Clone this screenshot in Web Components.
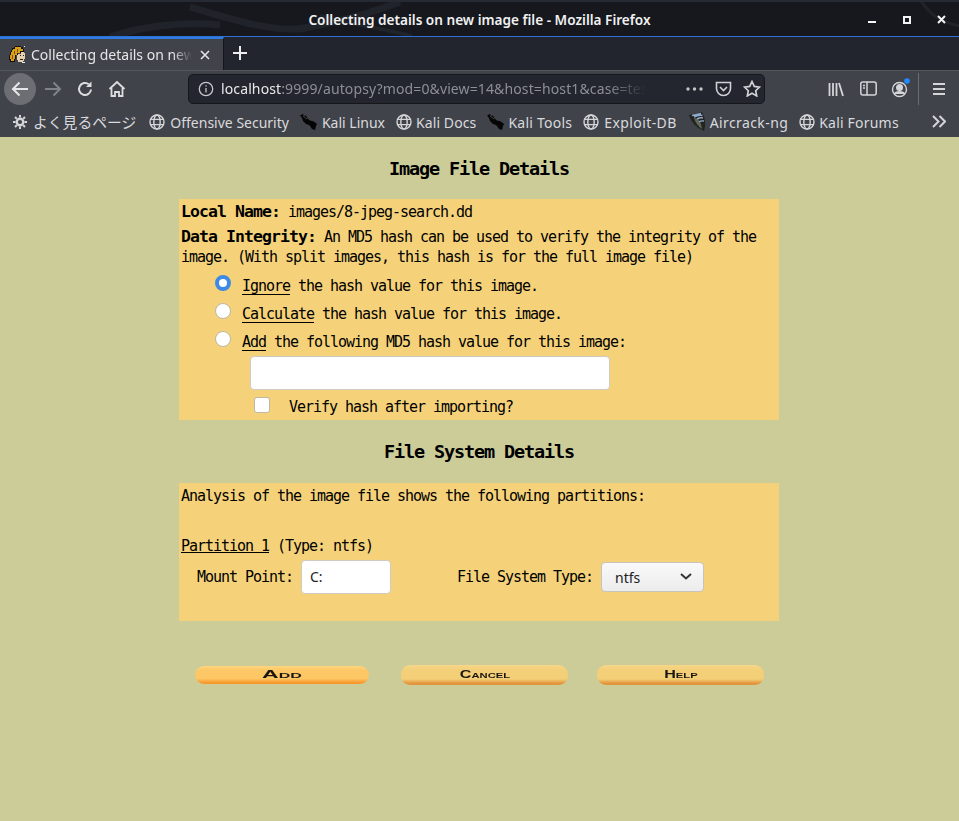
<!DOCTYPE html>
<html lang="en">
<head>
<meta charset="utf-8">
<title>Collecting details on new image file - Mozilla Firefox</title>
<style>
html, body { margin: 0; height: 100%; background: #cccc99; }
body { display: flex; flex-direction: column; width: 959px; height: 821px; overflow: hidden; }
</style>
</head>
<body>
<fx-titlebar>Collecting details on new image file - Mozilla Firefox</fx-titlebar>
<fx-tabstrip>Collecting details on new image file</fx-tabstrip>
<fx-navbar></fx-navbar>
<fx-bookmarks></fx-bookmarks>
<autopsy-page>
  <section-title>Image File Details</section-title>
  <form-panel style="height:221px">
    <p-line style="height:25px;padding-top:2px"><b>Local Name:</b> images/8-jpeg-search.dd</p-line>
    <p-line style="height:21px;padding-top:2px"><b>Data Integrity:</b> An MD5 hash can be used to verify the integrity of the</p-line>
    <p-line style="height:21px;padding-top:2px">image. (With split images, this hash is for the full image file)</p-line>
    <radio-row checked style="margin-top:9px"><u>Ignore</u> the hash value for this image.</radio-row>
    <radio-row><u>Calculate</u> the hash value for this image.</radio-row>
    <radio-row><u>Add</u> the following MD5 hash value for this image:</radio-row>
    <text-box width="360" height="34" style="margin:-3px 0 0 69px"></text-box>
    <check-row style="margin-top:1px">Verify hash after importing?</check-row>
  </form-panel>
  <section-title style="margin-top:15px;height:48px">File System Details</section-title>
  <form-panel style="height:138px">
    <p-line style="height:50px;padding-top:3px">Analysis of the image file shows the following partitions:</p-line>
    <p-line style="height:27px;padding-top:3px"><u>Partition 1</u> (Type: ntfs)</p-line>
    <mount-row></mount-row>
  </form-panel>
  <button-row>
    <pill-button label="Add" scale="2" style="width:174px;height:18px" top="#ffd67e" bottom="#f79a2e" mid="#fdc765"></pill-button>
    <pill-button label="Cancel" style="width:167px;height:20px;margin-left:32px" top="#f6d68a" bottom="#e2953c" mid="#f3cf78"></pill-button>
    <pill-button label="Help" style="width:167px;height:20px;margin-left:29px" top="#f6d68a" bottom="#e2953c" mid="#f3cf78"></pill-button>
  </button-row>
</autopsy-page>

<script>
const GLOBE = `<svg width="16" height="16" viewBox="0 0 16 16" fill="none" stroke="#d4d5d8" stroke-width="1.4"><circle cx="8" cy="8" r="7"/><ellipse cx="8" cy="8" rx="3.2" ry="7"/><path d="M1.6 5.4h12.8M1.6 10.6h12.8"/></svg>`;
const KNIFE = `<svg width="17" height="18" viewBox="0 0 17 18"><path d="M0 2.500L3 1l1 2 2-.5 1.500 3 2.500 2 2.500.5 2 1 2.500 2L16 13l-1 4-3-1-2-3-1-1-3-1-3-3-1-3z" fill="#050505"/><path d="M3 3l4 3" stroke="#777" stroke-width=".6"/></svg>`;

function define(name, css, html) {
    customElements.define(name, class extends HTMLElement {
        constructor() {
            super();
            this.attachShadow({ mode: "open" });
        }
        connectedCallback() {
            this.shadowRoot.innerHTML = `<style>${css}</style>` + (typeof html === "function" ? html(this) : html);
        }
    });
}

define("fx-titlebar", `
:host { display: flex; flex: none; height: 37px; box-sizing: border-box; background: #16181e; border-top: 2px solid #262b33;
  border-bottom: 1px solid #2f6fd6; position: relative; align-items: center; justify-content: center;
  color: #f1f1f2; font: 600 13.6px "Noto Sans", sans-serif; overflow: hidden; }
.art { position: absolute; left: 0; top: 0; }
span { position: relative; }
.btns { position: absolute; top: 0; right: 0; height: 34px; }
`, `
<svg class="art" width="959" height="35" fill="none" stroke="#20232a" stroke-width="7">
  <path d="M190 5c40 12 90 28 120 20 40-8 60-14 90-25"/>
  <path d="M110 35c30-10 70-16 110-12"/>
  <path d="M320 14c30 8 50 10 92 20" stroke-width="4"/>
  <path d="M920 -2c10 14 20 22 40 26" stroke-width="3"/>
</svg>
<span><slot></slot></span>
<svg class="btns" width="120" height="34" fill="none" stroke="#f4f4f4" stroke-width="2">
  <path d="M29 20h8"/>
  <rect x="65" y="15" width="6" height="6"/>
  <path d="M99 14l7 7M106 14l-7 7"/>
</svg>
`);

define("fx-tabstrip", `
:host { display: flex; flex: none; height: 33px; background: #22252e; color: #e6e6e8; font: 14px "Noto Sans", sans-serif; }
.tab { width: 224px; height: 33px; box-sizing: border-box; background: #41434b; border-top: 2px solid #2f7ce0; border-right: 1px solid #14161a;
  display: flex; align-items: center; padding-left: 9px; position: relative; }
.label { margin-left: 6px; width: 161px; overflow: hidden; white-space: nowrap; flex: none;
  -webkit-mask-image: linear-gradient(90deg,#000 88%,transparent); mask-image: linear-gradient(90deg,#000 88%,transparent); }
.close { margin-left: 7px; flex: none; }
.plus { margin: 9px 0 0 9px; }
`, `
<div class="tab">
  <svg width="16" height="17" viewBox="0 0 16 17" shape-rendering="crispEdges">
    <path d="M6 0h6v1h2v2h1v3h-3v1H9v2H7v4H6v3H1v-2H0V9h1V6h1V4h1V2h2V1h1z" fill="#111"/>
    <path d="M6 1h6v2h2v2h-3v2H8v2H6v4H5v2H2v-2H1V9h1V6h1V4h1V3h2z" fill="#dc9f18"/>
    <path d="M5 5h1v3H5zM8 3h1v3H8zM3 9h1v4H3z" fill="#7a5208"/>
    <path d="M9 8h3V6h3v1h1v6h-1v2h-1v1H9v-2H8V9h1z" fill="#e8cfae"/>
    <path d="M11 9h1v1h-1zM14 9h1v1h-1zM11 13h3v1h-3z" fill="#222"/>
    <path d="M15 0h1v1h-1zM13 16h3v1h-3z" fill="#e8e8e8"/>
  </svg>
  <div class="label"><slot></slot></div>
  <svg class="close" width="12" height="12" fill="none" stroke="#e4e4e6" stroke-width="1.6"><path d="M2 2l8 8M10 2l-8 8"/></svg>
</div>
<svg class="plus" width="14" height="14" fill="none" stroke="#eee" stroke-width="2"><path d="M7 0v14M0 7h14"/></svg>
`);

define("fx-navbar", `
:host { display: flex; flex: none; align-items: center; height: 36px; box-sizing: border-box; background: #41434b; color: #d9dadc;
  border-top: 1px solid #54565c; font: 14px "Noto Sans", sans-serif; }
.b { flex: none; width: 32px; height: 32px; display: flex; align-items: center; justify-content: center; }
.back { margin-left: 4px; background: #6c6e74; border-radius: 50%; }
.url { flex: none; margin-left: 55px; width: 577px; height: 30px; box-sizing: border-box; background: #23262f;
  border: 1px solid #15171b; border-radius: 5px; display: flex; align-items: center; position: relative; overflow: hidden; }
.info { margin-left: 9px; flex: none; }
.text { margin-left: 7px; width: 434px; flex: none; white-space: nowrap; overflow: hidden; color: #8d8f94; font-size: 14px; letter-spacing: .12px;
  -webkit-mask-image: linear-gradient(90deg,#000 89%,transparent 98%); mask-image: linear-gradient(90deg,#000 89%,transparent 98%); }
.text b { font-weight: 400; color: #e8e8ea; }
.dots { margin-left: 31px; flex: none; }
.pocket { margin-left: 12px; flex: none; }
.star { margin-left: 11px; flex: none; }
.sep { width: 1px; height: 32px; background: #6a6c72; margin: 0 12px 0 2px; }
.i { flex: none; display: flex; align-items: center; justify-content: center; width: 32px; height: 32px; }
`, `
<div class="b back"><svg width="20" height="18" fill="none" stroke="#e6e6e8" stroke-width="2"><path d="M18 9H3M9.500 2.500L3 9l6.500 6.500"/></svg></div>
<div class="b" style="margin-left:1px"><svg width="20" height="18" fill="none" stroke="#80828a" stroke-width="2"><path d="M2 9h15M10.500 2.500L17 9l-6.500 6.500"/></svg></div>
<div class="b"><svg width="18" height="18" fill="none" stroke="#dedee0" stroke-width="2"><path d="M15 9.500A6 6 0 1 1 12.800 4.300"/><path d="M15.500 1.500v5.500h-5.500z" fill="#dedee0" stroke="none"/></svg></div>
<div class="b"><svg width="18" height="18" fill="none" stroke="#dedee0" stroke-width="1.800"><path d="M1.500 9L9 2l7.500 7"/><path d="M3.500 8v8h3.500v-4h4v4h3.500V8"/></svg></div>
<div class="url">
  <svg class="info" width="16" height="16" fill="none" stroke="#c6c7ca" stroke-width="1.300"><circle cx="8" cy="8" r="6.700"/><path d="M8 7v4.500M8 4.200v1.300"/></svg>
  <div class="text"><b>localhost</b>:9999/autopsy?mod=0&amp;view=14&amp;host=host1&amp;case=tes</div>
  <svg class="dots" width="17" height="4" fill="#c4c5c8"><circle cx="2" cy="2" r="1.700"/><circle cx="8.500" cy="2" r="1.700"/><circle cx="15" cy="2" r="1.700"/></svg>
  <svg class="pocket" width="17" height="16" fill="none" stroke="#d0d1d4" stroke-width="1.600"><path d="M1.500 1.500h14v6a7 7 0 0 1-14 0z"/><path d="M5 6l3.500 3.500L12 6"/></svg>
  <svg class="star" width="18" height="17" fill="none" stroke="#d0d1d4" stroke-width="1.700"><path d="M9 1.500l2.300 4.900 5.200.7-3.800 3.600 1 5.200L9 13.300l-4.700 2.600 1-5.200L1.500 7.100l5.200-.7z"/></svg>
</div>
<div class="i" style="margin-left:55px"><svg width="16" height="16" fill="none" stroke="#d4d5d8" stroke-width="1.800"><path d="M1.500 2v13M5 2v13M8.500 2v13M11 2l4 13"/></svg></div>
<div class="i"><svg width="17" height="15" fill="none" stroke="#d4d5d8" stroke-width="1.500"><rect x=".8" y="1" width="15.400" height="13" rx="2"/><path d="M7 1v13M3 4.500h2M3 7h2"/></svg></div>
<div class="i" style="position:relative"><svg width="18" height="18" fill="none" stroke="#d4d5d8" stroke-width="1.400"><circle cx="8.500" cy="9.500" r="7"/><circle cx="8.500" cy="7.500" r="2.800" fill="#d4d5d8"/><path d="M3.500 14c1-3 9-3 10 0" fill="#d4d5d8"/></svg><svg style="position:absolute;left:20px;top:5px" width="6" height="6"><circle cx="3" cy="3" r="2.800" fill="#1f8bff"/></svg></div>
<div class="sep"></div>
<div class="i" style="width:16px"><svg width="14" height="13" fill="none" stroke="#d4d5d8" stroke-width="2"><path d="M1 2h12M1 7h12M1 12h12"/></svg></div>
`);

define("fx-bookmarks", `
:host { display: flex; flex: none; align-items: center; height: 31px; background: #41434b; color: #d9dadc; font: 14px "Noto Sans", "Noto Sans CJK JP", sans-serif;
  padding-left: 13px; white-space: nowrap; position: relative; box-sizing: border-box; }
.it { display: flex; align-items: center; gap: 5px; margin-right: 11px; flex: none; }
.it span { position: relative; top: 1px; }
.it .jp { font-size: 14.8px; top: 0; }
.air { flex: none; margin-right: 1px; }
.chev { position: absolute; right: 13px; top: 9px; }
`, `
<div class="it" style="gap:6px;margin-right:13px"><svg width="14" height="14" viewBox="0 0 14 14" fill="none" stroke="#d4d5d8"><circle cx="7" cy="7" r="3.300" stroke-width="2.400"/><path d="M7 0v2.500M7 11.500V14M0 7h2.500M11.500 7H14M2 2l1.800 1.800M10.200 10.200L12 12M12 2l-1.800 1.800M3.800 10.200L2 12" stroke-width="2"/></svg><span class="jp">よく見るページ</span></div>
<div class="it">${GLOBE}<span>Offensive Security</span></div>
<div class="it">${KNIFE}<span>Kali Linux</span></div>
<div class="it" style="gap:4px">${GLOBE}<span style="letter-spacing:.1px">Kali Docs</span></div>
<div class="it" style="gap:4px">${KNIFE}<span style="letter-spacing:.25px">Kali Tools</span></div>
<div class="it" style="margin-right:12px">${GLOBE}<span style="letter-spacing:.4px">Exploit-DB</span></div>
<div class="it" style="gap:4px;margin-right:11px"><svg class="air" width="16" height="19" viewBox="0 0 16 19"><path d="M0 3L13 0q5 9 2 19Q3 14 0 3z" fill="#23241f"/><path d="M5 6q5 0 7 6l1 5q-6-4-8-11z" fill="#5e6656"/><path d="M3 3.500L12 1.500M5 5c3-1.500 6-2 8.500-1.500M8 7c2-1 4-1.500 6-1M10 10q2-1.500 5-1" fill="none" stroke="#8fa9cc" stroke-width="1.400"/></svg><span style="letter-spacing:.4px">Aircrack-ng</span></div>
<div class="it" style="gap:4px">${GLOBE}<span style="letter-spacing:.2px">Kali Forums</span></div>
<svg class="chev" width="14" height="13" fill="none" stroke="#d4d5d8" stroke-width="2"><path d="M1 1l5.500 5.500L1 12M7.500 1l5.500 5.500L7.500 12"/></svg>
`);

define("autopsy-page", `
:host { display: block; flex: 1; background: #cccc99; padding: 15px 0 0 179px; color: #000;
  font: 15px "DejaVu Sans Mono", monospace; letter-spacing: -1.03px; }
`, `<slot></slot>`);

define("section-title", `
:host { display: block; width: 600px; height: 47px; text-align: center; font: bold 18.5px "DejaVu Sans Mono", monospace; letter-spacing: -1.14px; padding-top: 6px; box-sizing: border-box; }
`, `<slot></slot>`);

define("form-panel", `
:host { display: block; width: 600px; background: #f5d27a; box-sizing: border-box; padding: 0 2px; overflow: hidden; }
`, `<slot></slot>`);

define("p-line", `
:host { display: block; box-sizing: border-box; white-space: pre; line-height: 21px; }
::slotted(b) { font-size: 16.5px; letter-spacing: -.93px; }
`, `<slot></slot>`);

define("radio-row", `
:host { display: flex; height: 28px; align-items: flex-start; white-space: pre; margin-left: 34px; line-height: 20px; box-sizing: border-box; }
.r { flex: none; width: 16px; height: 16px; border-radius: 50%; background: #fff; box-sizing: border-box; border: 1px solid #bdb7a4; margin: 0 11px 0 0; }
:host([checked]) .r { border: 4.5px solid #3d8ae6; }
span { display: block; position: relative; top: 1px; }
::slotted(u) { text-underline-offset: 3px; }
`, `<div class="r"></div><span><slot></slot></span>`);

define("text-box", `
:host { display: block; box-sizing: border-box; background: #fff; border: 1px solid #cfcbc0; border-radius: 4px; color: #222; font: 14px "Noto Sans", sans-serif; letter-spacing: 0; }
`, host => {
    host.style.width = host.getAttribute("width") + "px";
    host.style.height = host.getAttribute("height") + "px";
    return `<slot></slot>`;
});

define("check-row", `
:host { display: flex; align-items: center; height: 30px; margin-left: 73px; white-space: pre; box-sizing: border-box; }
.c { flex: none; width: 16px; height: 16px; box-sizing: border-box; background: #fff; border: 1px solid #bdb7a4; border-radius: 3px; margin-right: 19px; position: relative; top: -1px; }
span { position: relative; top: 1px; }
`, `<div class="c"></div><span><slot></slot></span>`);

define("mount-row", `
:host { display: flex; align-items: center; height: 34px; margin-left: 16px; white-space: pre; }
.box { flex: none; width: 90px; height: 34px; margin-left: 8px; box-sizing: border-box; background: #fff; border: 1px solid #cfcbc0; border-radius: 4px;
  font: 14px "Noto Sans", sans-serif; letter-spacing: 0; color: #222; line-height: 32px; padding-left: 8px; }
.lbl2 { margin-left: 66px; }
.sel { flex: none; width: 103px; height: 30px; margin-left: 8px; box-sizing: border-box; border: 1px solid #c6c4bc; border-radius: 4px;
  background: linear-gradient(#f9f9f9,#ececec); font: 14px "Noto Sans", sans-serif; letter-spacing: 0; color: #222; display: flex; align-items: center; padding-left: 13px; position: relative; }
.sel svg { position: absolute; left: 78px; top: 10px; }
`, `
<span>Mount Point:</span><div class="box">C:</div>
<span class="lbl2">File System Type:</span>
<div class="sel">ntfs<svg width="12" height="7" fill="none" stroke="#333" stroke-width="2"><path d="M1 1l5 4.500L11 1"/></svg></div>
`);

define("button-row", `
:host { display: flex; align-items: center; margin: 44px 0 0 16px; }
`, `<slot></slot>`);

define("pill-button", `
:host { display: flex; flex: none; align-items: center; justify-content: center; box-sizing: border-box; border-radius: 9px; color: #1b1510;
  font: bold 11.5px "Liberation Sans", Arial, sans-serif; font-variant: small-caps; letter-spacing: 0; }
span { display: inline-block; line-height: 1; }
`, host => {
    const t = host.getAttribute("top"), m = host.getAttribute("mid"), b = host.getAttribute("bottom");
    host.style.background = `linear-gradient(${t} 0,${m} 25%,${m} 70%,${b} 92%)`;
    return `<span style="transform:scaleX(${host.getAttribute("scale") || 1.4})">${host.getAttribute("label")}</span>`;
});
</script>
</body>
</html>
